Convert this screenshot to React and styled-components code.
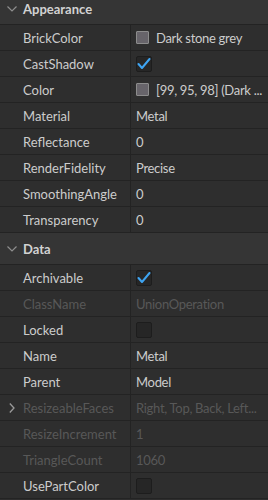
import React from "react";
import styled, { createGlobalStyle } from "styled-components";

const Global = createGlobalStyle`
  html, body { margin: 0; padding: 0; background: #2e2e2e; overflow: hidden; }
  * { box-sizing: border-box; }
`;

const Panel = styled.div`
  width: 268px;
  margin-top: -7px;
  font-family: "Lato", "Open Sans", sans-serif;
  font-size: 13px;
  color: #cccccc;
  background: #2e2e2e;
`;

const Header = styled.div`
  height: 32px;
  display: flex;
  align-items: center;
  padding-top: 1px;
  background: #353535;
  border-bottom: 1px solid #232323;
  font-weight: 700;
  color: #d2d2d2;
`;

const Toggle = styled.span`
  flex: none;
  width: 23px;
  display: flex;
  justify-content: center;
  align-items: center;
  color: #9a9a9a;
`;

const Row = styled.div`
  height: 26px;
  display: grid;
  grid-template-columns: 131px 1fr;
  border-bottom: 1px solid #232323;
  background: #2e2e2e;
`;

const NameCell = styled.div`
  display: flex;
  align-items: center;
  border-right: 1px solid #232323;
  color: ${(p) => (p.$disabled ? "#585858" : "#cccccc")};
  white-space: nowrap;
  overflow: hidden;
`;

const ValueCell = styled.div`
  display: flex;
  align-items: center;
  gap: 7px;
  padding-left: 5px;
  padding-right: 2px;
  min-width: 0;
  color: ${(p) => (p.$disabled ? "#585858" : "#cccccc")};
`;

const ValueText = styled.span`
  white-space: nowrap;
  letter-spacing: -0.3px;
  min-width: 0;
`;

const Swatch = styled.span`
  flex: none;
  width: 13px;
  height: 13px;
  background: ${(p) => p.$color};
  border: 1px solid #8c8c8c;
  border-radius: 1px;
`;

const Box = styled.span`
  flex: none;
  width: 16px;
  height: 16px;
  background: #262626;
  border: 1px solid #1d1d1d;
  border-radius: 2px;
  display: flex;
  align-items: center;
  justify-content: center;
`;

const ChevronDown = () => (
  <svg width="10" height="6" viewBox="0 0 10 6">
    <polyline points="0.5,0.5 5,5 9.5,0.5" fill="none" stroke="#8e8e8e" strokeWidth="1.2" />
  </svg>
);

const ChevronRight = () => (
  <svg width="6" height="10" viewBox="0 0 6 10">
    <polyline points="0.8,0.5 5,5 0.8,9.5" fill="none" stroke="#9a9a9a" strokeWidth="1.3" />
  </svg>
);

const Check = ({ on }) => (
  <Box>
    {on && (
      <svg width="14" height="12" viewBox="0 0 14 12">
        <polyline points="1.5,6 5,10 12.5,1" fill="none" stroke="#3ea4f2" strokeWidth="2" strokeLinecap="round" strokeLinejoin="round" />
      </svg>
    )}
  </Box>
);

const sections = [
  {
    title: "Appearance",
    rows: [
      { name: "BrickColor", value: "Dark stone grey", swatch: "#67646a" },
      { name: "CastShadow", check: true },
      { name: "Color", value: "[99, 95, 98] (Dark ...", swatch: "#67646a" },
      { name: "Material", value: "Metal" },
      { name: "Reflectance", value: "0" },
      { name: "RenderFidelity", value: "Precise" },
      { name: "SmoothingAngle", value: "0" },
      { name: "Transparency", value: "0" },
    ],
  },
  {
    title: "Data",
    rows: [
      { name: "Archivable", check: true },
      { name: "ClassName", value: "UnionOperation", disabled: true },
      { name: "Locked", check: false },
      { name: "Name", value: "Metal" },
      { name: "Parent", value: "Model" },
      { name: "ResizeableFaces", value: "Right, Top, Back, Left...", disabled: true, expand: true },
      { name: "ResizeIncrement", value: "1", disabled: true },
      { name: "TriangleCount", value: "1060", disabled: true },
      { name: "UsePartColor", check: false },
    ],
  },
];

export default function App() {
  return (
    <>
      <Global />
      <Panel>
        {sections.map((s) => (
          <div key={s.title}>
            <Header>
              <Toggle>
                <ChevronDown />
              </Toggle>
              {s.title}
            </Header>
            {s.rows.map((r) => (
              <Row key={r.name}>
                <NameCell $disabled={r.disabled}>
                  <Toggle>{r.expand && <ChevronRight />}</Toggle>
                  {r.name}
                </NameCell>
                <ValueCell $disabled={r.disabled}>
                  {r.swatch && <Swatch $color={r.swatch} />}
                  {r.check !== undefined && <Check on={r.check} />}
                  {r.value !== undefined && <ValueText>{r.value}</ValueText>}
                </ValueCell>
              </Row>
            ))}
          </div>
        ))}
      </Panel>
    </>
  );
}
